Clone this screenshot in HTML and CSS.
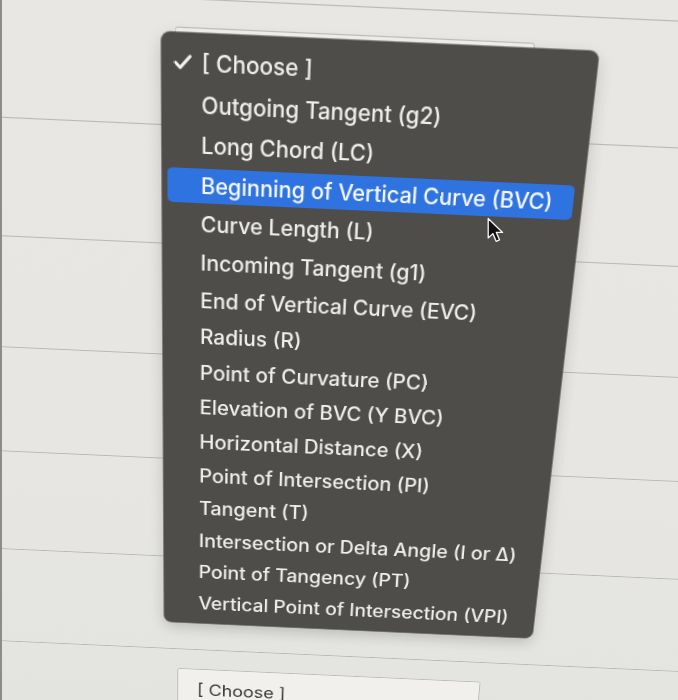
FILE: index.html
```html
<!DOCTYPE html>
<html lang="en">
<head>
    <meta charset="UTF-8">
    <meta name="viewport" content="width=device-width, initial-scale=1.0">
    <title>Curve terms</title>

    <link rel="stylesheet" href="styles.css">
</head>
<body>

<div class="stage">
  <div class="page">
    <div class="row"></div>
    <div class="row">
      <div class="select select-open"></div>
    </div>
    <div class="row"></div>
    <div class="row"></div>
    <div class="row"></div>
    <div class="row"></div>
    <div class="row"></div>
    <div class="row">
      <div class="select">[ Choose ]</div>
    </div>
    <div class="row"></div>

    <ul class="menu">
      <li class="menu-item checked">
        <svg class="check" viewBox="0 0 16 13" width="17" height="14">
          <path d="M1.6 7 L5.8 11.2 L14.4 1.6" fill="none" stroke="#f4f4f1" stroke-width="2.6" stroke-linecap="round" stroke-linejoin="round"/>
        </svg>
        [ Choose ]
      </li>
      <li class="menu-item">Outgoing Tangent (g2)</li>
      <li class="menu-item">Long Chord (LC)</li>
      <li class="menu-item active">Beginning of Vertical Curve (BVC)</li>
      <li class="menu-item">Curve Length (L)</li>
      <li class="menu-item">Incoming Tangent (g1)</li>
      <li class="menu-item">End of Vertical Curve (EVC)</li>
      <li class="menu-item">Radius (R)</li>
      <li class="menu-item">Point of Curvature (PC)</li>
      <li class="menu-item">Elevation of BVC (Y BVC)</li>
      <li class="menu-item">Horizontal Distance (X)</li>
      <li class="menu-item">Point of Intersection (PI)</li>
      <li class="menu-item">Tangent (T)</li>
      <li class="menu-item">Intersection or Delta Angle (I or &Delta;)</li>
      <li class="menu-item">Point of Tangency (PT)</li>
      <li class="menu-item">Vertical Point of Intersection (VPI)</li>
    </ul>
  </div>

  <svg class="cursor" viewBox="0 0 15 22" width="18" height="27">
    <path d="M1 1 L1 17.2 L4.9 13.6 L7.6 20 L10.4 18.8 L7.8 12.6 L13 12.6 Z" fill="#111" stroke="#f5f5f5" stroke-width="1.1" stroke-linejoin="round"/>
  </svg>
</div>

</body>
</html>
```

FILE: styles.css
```css
/*CSS RESETS*/

body {
    margin: 0;
    background-color: #e6e5e1;
    font-family: "Inter", "Liberation Sans", sans-serif;
}

ul {
    margin: 0;
    padding: 0;
    list-style: none;
}


/*CSS START*/

/* the photo is taken at an angle, so the whole screen is tilted */
.stage {
    position: relative;
    width: 678px;
    height: 700px;
    overflow: hidden;
    perspective: 1000px;
    perspective-origin: 180px 340px;
}

.stage::after {
    content: "";
    position: absolute;
    left: 0;
    top: 0;
    bottom: 0;
    width: 2px;
    background-color: #8d8c88;
}

.page {
    position: relative;
    width: 838px;
    margin-left: -80px;
    margin-top: -96px;
    transform-origin: 260px 436px;
    transform: skewY(2.6deg) rotateX(-16.5deg);
    background: linear-gradient(to bottom, #e8e7e3 0%, #e7e6e2 55%, #e1e2df 100%);
}

.row {
    height: 113px;
    box-sizing: border-box;
    border-bottom: 1px solid #b9b8b4;
    padding-top: 24px;
    padding-left: 257px;
}

.select {
    width: 336px;
    height: 46px;
    box-sizing: border-box;
    padding: 8px 0 0 21px;
    border: 1px solid #bdbcb8;
    border-radius: 3px;
    background-color: #f1f0ed;
    font-size: 20px;
    line-height: 36px;
    color: #3a3a38;
}

.select-open {
    width: 330px;
    margin-left: -2px;
    background-color: #f3f2ef;
}

.menu {
    position: absolute;
    left: 243px;
    top: 142px;
    width: 401px;
    padding: 8px 0 5px;
    border-radius: 8px;
    background-color: #4e4d4a;
    box-shadow: 0 0 0 1px rgba(40, 40, 38, 0.5), 0 6px 16px rgba(0, 0, 0, 0.18);
}

.menu-item {
    position: relative;
    height: 37.6px;
    box-sizing: border-box;
    margin: 0 8px 0 5px;
    padding-left: 32px;
    border-top: 2px solid transparent;
    border-bottom: 2px solid transparent;
    border-radius: 6px;
    background-clip: padding-box;
    font-size: 20.8px;
    font-weight: 500;
    line-height: 33.6px;
    color: #efeeea;
    white-space: nowrap;
}

.menu-item.active {
    background-color: #2f73e0;
    color: #f8f9fc;
}

.check {
    position: absolute;
    left: 6px;
    top: 9px;
}

.cursor {
    position: absolute;
    left: 487px;
    top: 217px;
}
```
